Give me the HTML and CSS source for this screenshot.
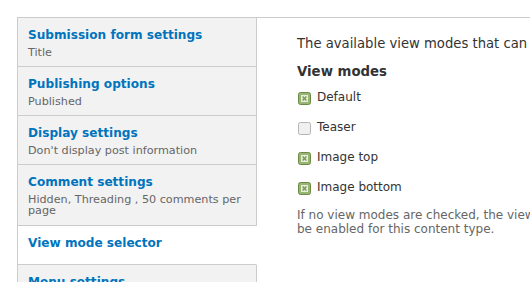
FILE: index.html
```html
<!DOCTYPE html>
<html>
<head>
<meta charset="utf-8">
<link rel="stylesheet" href="styles.css">
</head>
<body>
<div class="vtabs">
  <ul class="vtabs-menu">
    <li class="tab"><a class="tab-title" href="#">Submission form settings</a><span class="tab-summary">Title</span></li>
    <li class="tab"><a class="tab-title" href="#">Publishing options</a><span class="tab-summary">Published</span></li>
    <li class="tab"><a class="tab-title" href="#">Display settings</a><span class="tab-summary">Don't display post information</span></li>
    <li class="tab"><a class="tab-title" href="#">Comment settings</a><span class="tab-summary">Hidden, Threading , 50 comments per page</span></li>
    <li class="tab tab-selected"><a class="tab-title" href="#">View mode selector</a></li>
    <li class="tab"><a class="tab-title" href="#">Menu settings</a><span class="tab-summary">Not in menu</span></li>
  </ul>
  <div class="vtabs-pane">
    <p class="intro">The available view modes that can be selected for this content type.</p>
    <div class="field-label">View modes</div>
    <div class="options">
      <label class="option">
        <svg class="cb" width="13" height="13" viewBox="0 0 13 13"><rect x="0.5" y="0.5" width="12" height="12" rx="2" fill="#98b574" stroke="#6c8a45"/><rect x="3" y="3" width="7" height="7" fill="#e6eedb"/><path d="M4.6 4.6 L8.4 8.4 M8.4 4.6 L4.6 8.4" stroke="#79964f" stroke-width="1.4"/></svg>
        <span>Default</span>
      </label>
      <label class="option">
        <svg class="cb" width="13" height="13" viewBox="0 0 13 13"><rect x="0.5" y="0.5" width="12" height="12" rx="2" fill="#f0f0f0" stroke="#b4b4b4"/></svg>
        <span>Teaser</span>
      </label>
      <label class="option">
        <svg class="cb" width="13" height="13" viewBox="0 0 13 13"><rect x="0.5" y="0.5" width="12" height="12" rx="2" fill="#98b574" stroke="#6c8a45"/><rect x="3" y="3" width="7" height="7" fill="#e6eedb"/><path d="M4.6 4.6 L8.4 8.4 M8.4 4.6 L4.6 8.4" stroke="#79964f" stroke-width="1.4"/></svg>
        <span>Image top</span>
      </label>
      <label class="option">
        <svg class="cb" width="13" height="13" viewBox="0 0 13 13"><rect x="0.5" y="0.5" width="12" height="12" rx="2" fill="#98b574" stroke="#6c8a45"/><rect x="3" y="3" width="7" height="7" fill="#e6eedb"/><path d="M4.6 4.6 L8.4 8.4 M8.4 4.6 L4.6 8.4" stroke="#79964f" stroke-width="1.4"/></svg>
        <span>Image bottom</span>
      </label>
    </div>
    <p class="description">If no view modes are checked, the view mode selector will not be enabled for this content type.</p>
  </div>
</div>
</body>
</html>
```
FILE: styles.css
```css
html, body {
  margin: 0;
  padding: 0;
  background: #fff;
  overflow: hidden;
}
body {
  font-family: "DejaVu Sans", sans-serif;
  color: #333;
  width: 530px;
  height: 282px;
}
.vtabs {
  display: flex;
  margin: 17px 0 0 17px;
  border-top: 1px solid #ccc;
  width: 900px;
}
.vtabs-menu {
  list-style: none;
  margin: 0;
  padding: 0;
  width: 239px;
  flex: none;
  background: #f2f2f2;
  border-left: 1px solid #ccc;
}
.tab {
  display: flex;
  flex-direction: column;
  padding: 8px 10px 8px 10px;
  border-bottom: 1px solid #ccc;
  border-right: 1px solid #ccc;
  background: #f2f2f2;
}
.tab-title {
  font-size: 12.1px;
  font-weight: bold;
  line-height: 18px;
  color: #0074bd;
  text-decoration: none;
}
.tab-summary {
  font-size: 11.2px;
  line-height: 11.5px;
  color: #666;
  margin-top: 2.5px;
}
.tab-selected {
  background: #fff;
  border-right-color: #fff;
  padding-bottom: 12px;
}
.vtabs-pane {
  flex: none;
  width: 600px;
  padding: 17px 0 0 40px;
  font-size: 13px;
}
.intro {
  margin: 0;
  font-size: 13.2px;
  line-height: 17px;
  white-space: nowrap;
}
.field-label {
  font-weight: bold;
  font-size: 13.3px;
  margin-top: 11px;
  line-height: 17px;
}
.options {
  display: flex;
  flex-direction: column;
  gap: 13px;
  margin-top: 9px;
  font-size: 12px;
}
.option {
  display: flex;
  align-items: center;
  gap: 6px;
  line-height: 17px;
  padding-left: 1px;
}
.cb {
  flex: none;
  margin-top: 2px;
}
.description {
  width: 390px;
  margin: 12px 0 0 0;
  font-size: 12px;
  line-height: 14px;
  color: #666;
}
```
